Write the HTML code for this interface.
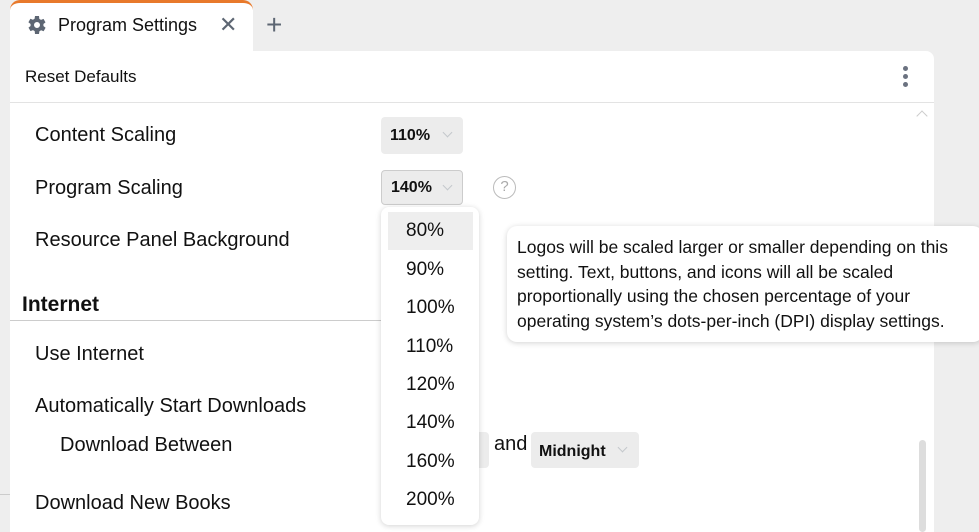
<!DOCTYPE html>
<html><head><style>
*{margin:0;padding:0;box-sizing:border-box}
body{width:979px;height:532px;overflow:hidden;background:#eeeeee;font-family:"Liberation Sans",sans-serif;position:relative;color:#111}
.a{position:absolute;white-space:nowrap}
.lbl{font-size:20px;left:35px}
.sel{position:absolute;background:#ececec;border-radius:4px;font-weight:bold;font-size:16px;padding-left:9px;display:flex;align-items:center}
.chev{position:absolute;width:7px;height:7px;border-right:1.5px solid #c4c8cc;border-bottom:1.5px solid #c4c8cc;transform:rotate(45deg)}
.it{position:absolute;left:0;width:100%;text-align:left;padding-left:25px;font-size:19px}
</style></head><body>
<div class="a" style="left:10px;top:0;width:243px;height:60px;background:#fff;border-top:3px solid #e8792b;border-radius:10px 10px 0 0"></div>
<svg class="a" style="left:24px;top:13px" width="24" height="24" viewBox="0 0 24 24"><path fill="#5d6673" d="M19.4 13a7.5 7.5 0 000-2l2.1-1.6-2-3.5-2.5 1a7.6 7.6 0 00-1.7-1L15 3h-4l-.4 2.7a7.6 7.6 0 00-1.7 1l-2.5-1-2 3.5L6.6 11a7.5 7.5 0 000 2l-2.1 1.6 2 3.5 2.5-1a7.6 7.6 0 001.7 1L11 21h4l.4-2.7a7.6 7.6 0 001.7-1l2.5 1 2-3.5zM13 15a3 3 0 1 1 0-6a3 3 0 0 1 0 6z"/></svg>
<div class="a" style="left:58px;top:15px;font-size:18px">Program Settings</div>
<div class="a" style="left:219px;top:12px;font-size:22px;color:#5d6673">✕</div>
<div class="a" style="left:266px;top:9px;font-size:28px;color:#5d6673">+</div>
<div class="a" style="left:10px;top:51px;width:924px;height:481px;background:#fff;border-radius:0 8px 0 0"></div>
<div class="a" style="left:25px;top:67px;font-size:17px">Reset Defaults</div>
<div class="a" style="left:903px;top:66px;width:5px;height:5px;border-radius:50%;background:#6b7280;box-shadow:0 8px 0 #6b7280,0 16px 0 #6b7280"></div>
<div class="a" style="left:10px;top:102px;width:924px;height:1px;background:#e3e3e3"></div>
<div class="a" style="left:918px;top:112px;width:8px;height:8px;border-left:1.5px solid #ccc;border-top:1.5px solid #ccc;transform:rotate(45deg)"></div>
<div class="a" style="left:919px;top:440px;width:7px;height:92px;background:#ddd;border-radius:4px"></div>
<div class="a" style="left:0;top:494px;width:10px;height:1px;background:#ccc"></div>

<div class="a lbl" style="top:124px">Content Scaling</div>
<div class="a lbl" style="top:177px">Program Scaling</div>
<div class="a lbl" style="top:229px">Resource Panel Background</div>
<div class="a" style="left:22px;top:293px;font-size:21px;font-weight:bold">Internet</div>
<div class="a" style="left:10px;top:320px;width:380px;height:1px;background:#ccc"></div>
<div class="a lbl" style="top:343px">Use Internet</div>
<div class="a lbl" style="top:395px">Automatically Start Downloads</div>
<div class="a lbl" style="top:434px;left:60px">Download Between</div>
<div class="a lbl" style="top:492px">Download New Books</div>

<div class="sel" style="left:381px;top:117px;width:82px;height:37px">110%<span class="chev" style="left:63px;top:12px"></span></div>
<div class="sel" style="left:381px;top:170px;width:82px;height:35px;border:1px solid #ccc">140%<span class="chev" style="left:62px;top:11px"></span></div>
<div class="a" style="left:493px;top:176px;width:23px;height:23px;border:1.5px solid #bbb;border-radius:50%;color:#aaa;font-size:15px;text-align:center;line-height:20px">?</div>
<div class="sel" style="left:470px;top:432px;width:19px;height:36px"></div>
<div class="a" style="left:494px;top:433px;font-size:20px">and</div>
<div class="sel" style="left:531px;top:432px;width:108px;height:36px;padding-left:8px;padding-top:3px">Midnight<span class="chev" style="left:88px;top:12px"></span></div>

<div class="a" style="left:381px;top:207px;width:98px;height:318px;background:#fff;border-radius:8px;box-shadow:0 1px 6px rgba(0,0,0,.18)">
<div class="a" style="left:7px;top:5px;width:85px;height:38px;background:#eeeeee"></div>
<div class="it" style="top:13px">80%</div>
<div class="it" style="top:52px">90%</div>
<div class="it" style="top:90px">100%</div>
<div class="it" style="top:129px">110%</div>
<div class="it" style="top:167px">120%</div>
<div class="it" style="top:205px">140%</div>
<div class="it" style="top:244px">160%</div>
<div class="it" style="top:282px">200%</div>
</div>

<div class="a" style="left:507px;top:226px;width:476px;height:116px;background:#fff;border-radius:10px;box-shadow:0 1px 6px rgba(0,0,0,.18);padding:9px 0 0 10px;font-size:17.5px;line-height:24.5px;white-space:normal">Logos will be scaled larger or smaller depending on this<br>setting. Text, buttons, and icons will all be scaled<br>proportionally using the chosen percentage of your<br>operating system’s dots-per-inch (DPI) display settings.</div>
</body></html>
